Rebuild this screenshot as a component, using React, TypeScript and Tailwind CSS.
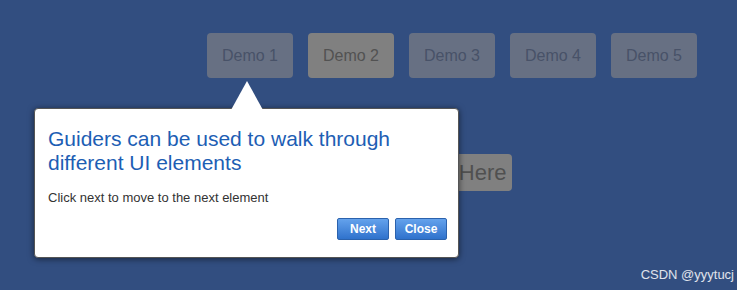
const demos = ['Demo 1', 'Demo 2', 'Demo 3', 'Demo 4', 'Demo 5']

const App = () => {
    return (
      <div className="relative w-[737px] h-[290px] overflow-hidden bg-[#324e80] font-['Liberation_Sans',Arial,sans-serif]">
          <div className="flex justify-end gap-[15px] pt-[33px] pr-[40px]">
              {demos.map((d) =>
                d === 'Demo 2' ? (
                  <div key={d} className="w-[86px] h-[45px] rounded-[4px] bg-[#808080] text-[#525252] text-[16px] flex items-center justify-center">
                      {d}
                  </div>
                ) : (
                  <div key={d} className="w-[86px] h-[45px] rounded-[4px] bg-[#677083] text-[#485268] text-[16px] flex items-center justify-center">
                      {d}
                  </div>
                )
              )}
          </div>

          <div className="ml-[399px] mt-[76px] w-fit h-[37px] px-[6px] rounded-[4px] bg-[#808080] text-[#505050] text-[22px] flex items-center">
              Click Here
          </div>

          {/* guider */}
          <div className="absolute left-[34px] top-[108px] w-[425px] h-[150px] bg-white border border-[#555] rounded-[4px] shadow-[0_1px_6px_rgba(0,0,0,0.55)] pl-[13px] pr-[11px] pt-[18px]">
              <div className="absolute left-[196px] -top-[28px] w-0 h-0 border-l-[16px] border-r-[16px] border-b-[29px] border-l-transparent border-r-transparent border-b-white" />
              <h1 className="text-[21px] leading-[24px] text-[#1d5eb4]">
                  Guiders can be used to walk through
                  <br />
                  different UI elements
              </h1>
              <p className="mt-[15px] text-[13px] leading-[16px] text-[#333]">
                  Click next to move to the next element
              </p>
              <div className="mt-[12px] flex justify-end gap-[6px]">
                  <button className="w-[52px] h-[22px] rounded-[2px] border border-[#2b62ad] bg-gradient-to-b from-[#64a2ec] to-[#2f72cc] text-white text-[12px] font-bold">
                      Next
                  </button>
                  <button className="w-[52px] h-[22px] rounded-[2px] border border-[#2b62ad] bg-gradient-to-b from-[#64a2ec] to-[#2f72cc] text-white text-[12px] font-bold">
                      Close
                  </button>
              </div>
          </div>

          <div className="absolute right-[3px] bottom-[8px] text-[13px] leading-[14px] text-white/85">
              CSDN @yyytucj
          </div>
      </div>
    )
}

export default App
